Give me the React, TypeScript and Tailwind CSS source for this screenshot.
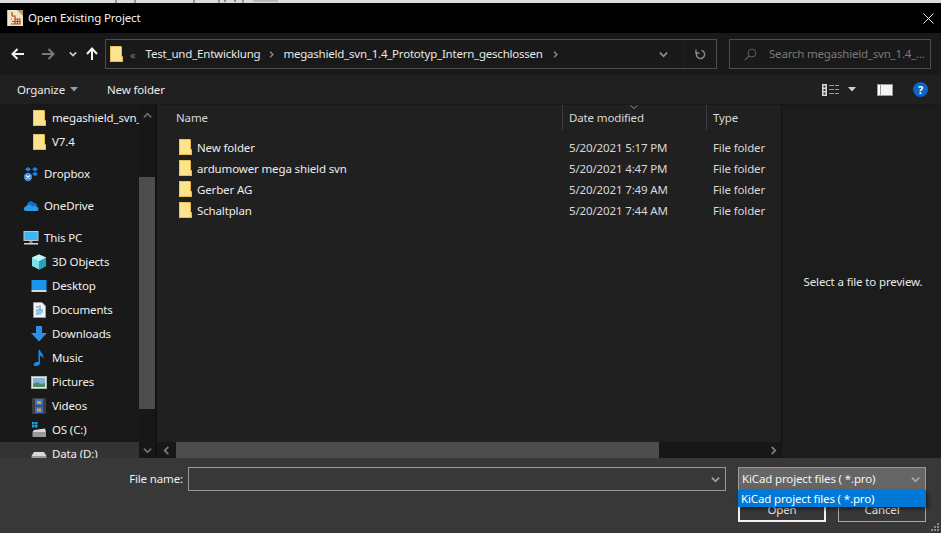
import React from "react";

function Folder({ className = "" }: { className?: string }) {
  return (
    <svg viewBox="0 0 13 16" className={`w-[13px] h-[16px] shrink-0 ${className}`}>
      <path d="M0 0H11.5V10.5H13V16H0Z" fill="#FDE38E" />
      <path d="M0.5 0.5H11M0.5 0.5V15.5" fill="none" stroke="#E9C25E" />
      <path d="M11.5 1V10.5H12.5V15.5H1" fill="none" stroke="#EDB93F" />
    </svg>
  );
}

const Chevron = ({ dir = "down", color = "#7f7f7f", size = 10 }: { dir?: string; color?: string; size?: number }) => {
  const d = { down: "M1 3L5 7L9 3", up: "M1 7L5 3L9 7", left: "M7 1L3 5L7 9", right: "M3 1L7 5L3 9" }[dir];
  return (
    <svg viewBox="0 0 10 10" width={size} height={size} className="shrink-0">
      <path d={d} fill="none" stroke={color} strokeWidth="2" />
    </svg>
  );
};

const sideIcons: Record<string, React.ReactNode> = {
  dropbox: (
    <svg viewBox="0 0 16 16" className="w-4 h-4">
      <path d="M5 1L8 3.2L5 5.5L2 3.2ZM12 1L15 3.2L12 5.5L9 3.2ZM9 8L12 5.7L15 8L12 10.2Z" fill="#1a82e8" />
      <circle cx="5" cy="11" r="4.2" fill="#3f8fe0" />
      <path d="M3 9.5L7 12.5M3 12.5L7 9.5" stroke="#fff" strokeWidth="1.2" />
    </svg>
  ),
  onedrive: (
    <svg viewBox="0 0 16 12" className="w-4 h-3">
      <path d="M4 4C5 1 9 0 11 3C13 3 14 4 14 6L6 8Z" fill="#0f6fc6" />
      <path d="M3 11C0 11 0 7 3 6.5C4 4 8 4 9 6.5C12 5 16 7 15.5 9.5C15.5 10.5 14.5 11 14 11Z" fill="#2a9ae8" />
    </svg>
  ),
  pc: (
    <svg viewBox="0 0 16 16" className="w-4 h-4">
      <rect x="0.5" y="1" width="15" height="10" fill="#bfc5ca" />
      <rect x="1.5" y="2" width="13" height="8" fill="#3db4f2" />
      <rect x="6.5" y="11" width="3" height="2" fill="#8a8f94" />
      <rect x="1" y="13" width="14" height="1.5" fill="#d5d8da" />
    </svg>
  ),
  objects: (
    <svg viewBox="0 0 16 16" className="w-4 h-4">
      <path d="M8 0.5L15 3.5V12L8 15.5L1 12V3.5Z" fill="#7fe0ea" />
      <path d="M8 7L15 3.5V12L8 15.5Z" fill="#1fa5c4" />
      <path d="M8 0.5L15 3.5L8 7L1 3.5Z" fill="#c5f4f6" />
    </svg>
  ),
  desktop: (
    <svg viewBox="0 0 16 14" className="w-4 h-[14px]">
      <rect x="0.5" y="1" width="15" height="10.5" fill="#1996ef" />
      <rect x="0.5" y="11" width="15" height="2" fill="#cfd8df" />
    </svg>
  ),
  documents: (
    <svg viewBox="0 0 13 16" className="w-[13px] h-4">
      <path d="M0.5 0.5H9L12.5 4V15.5H0.5Z" fill="#f2f2f2" stroke="#9a9a9a" />
      <path d="M3 5H6M7 3V8M3 8H10M3 10H10M3 12H8" stroke="#3d8fd0" strokeWidth="1" />
    </svg>
  ),
  downloads: (
    <svg viewBox="0 0 16 16" className="w-4 h-4">
      <path d="M5 0H11V7H16L8 15.5L0 7H5Z" fill="#2f8fe6" />
    </svg>
  ),
  music: (
    <svg viewBox="0 0 12 16" className="w-3 h-4">
      <path d="M5.5 0H7C7.5 3 11 4 10.5 9C10 7 8.5 6 7 5.8V13C7 15 4.5 16 2.5 16C0.5 16 0 14 1.5 13C2.5 12 4.5 11.7 5.5 12Z" fill="#1590ee" />
    </svg>
  ),
  pictures: (
    <svg viewBox="0 0 16 13" className="w-4 h-[13px]">
      <rect x="0.5" y="0.5" width="15" height="12" fill="#e4e4e4" stroke="#b0b0b0" />
      <rect x="2" y="2" width="12" height="9" fill="#7fb6d8" />
      <path d="M2 8L6 6L10 8L14 7V11H2Z" fill="#4e8a6a" />
    </svg>
  ),
  videos: (
    <svg viewBox="0 0 14 16" className="w-[14px] h-4">
      <rect width="14" height="16" fill="#3d3d3d" />
      <rect x="3" y="1" width="8" height="6.5" fill="#3c6fc0" />
      <rect x="3" y="8.5" width="8" height="6.5" fill="#3c6fc0" />
      <rect x="5" y="3" width="4" height="3" fill="#c8a63a" />
      <rect x="5" y="10.5" width="4" height="3" fill="#c8a63a" />
    </svg>
  ),
  os: (
    <svg viewBox="0 0 16 16" className="w-4 h-4">
      <path d="M1 0H3.5V2.5H1ZM4 0H6.5V2.5H4ZM1 3H3.5V5.5H1ZM4 3H6.5V5.5H4Z" fill="#1ba1e8" />
      <path d="M3 8L14 6.5L15 10H1.5Z" fill="#d8d8d8" />
      <rect x="1.5" y="10" width="13.5" height="5" fill="#9a9a9a" />
      <rect x="11" y="12" width="2" height="1.5" fill="#4fd060" />
    </svg>
  ),
  data: (
    <svg viewBox="0 0 16 16" className="w-4 h-4 translate-y-[5px]">
      <path d="M3 1H13L15.5 5H0.5Z" fill="#d8d8d8" />
      <rect x="0.5" y="5" width="15" height="5" fill="#9a9a9a" />
    </svg>
  ),
};

const sidebar = [
  { label: "megashield_svn_", icon: "folder", indent: 1 },
  { label: "V7.4", icon: "folder", indent: 1 },
  { label: "Dropbox", icon: "dropbox", indent: 0, gap: true },
  { label: "OneDrive", icon: "onedrive", indent: 0, gap: true },
  { label: "This PC", icon: "pc", indent: 0, gap: true },
  { label: "3D Objects", icon: "objects", indent: 1 },
  { label: "Desktop", icon: "desktop", indent: 1 },
  { label: "Documents", icon: "documents", indent: 1 },
  { label: "Downloads", icon: "downloads", indent: 1 },
  { label: "Music", icon: "music", indent: 1 },
  { label: "Pictures", icon: "pictures", indent: 1 },
  { label: "Videos", icon: "videos", indent: 1 },
  { label: "OS (C:)", icon: "os", indent: 1 },
  { label: "Data (D:)", icon: "data", indent: 1, active: true },
];

const files = [
  ["New folder", "5/20/2021 5:17 PM"],
  ["ardumower mega shield svn", "5/20/2021 4:47 PM"],
  ["Gerber AG", "5/20/2021 7:49 AM"],
  ["Schaltplan", "5/20/2021 7:44 AM"],
];

export default function App() {
  return (
    <div className="relative w-[941px] h-[533px] overflow-hidden bg-[#383838] text-[11.5px] leading-none text-[#f0f0f0] flex flex-col font-['Noto_Sans','Open_Sans',sans-serif] tracking-[-0.14px]">
      {/* background window sliver */}
      <svg viewBox="0 0 941 3" className="w-[941px] h-[3px] shrink-0 block">
        <rect width="941" height="3" fill="#dcdcdc" />
        <path d="M116 0V3M135 0V3M194 0V3M219 0V3M243 0V3" stroke="#555" />
        <path d="M225 0V2M235 0V2" stroke="#7a2a2a" />
        <path d="M253 1H278" stroke="#999" />
      </svg>

      {/* title */}
      <div className="h-[30px] bg-black shrink-0 flex items-center pl-[7px] pr-[7px] gap-[5px]">
        <svg viewBox="0 0 16 16" className="w-4 h-4 shrink-0">
          <rect width="16" height="16" fill="#efe4c8" />
          <path d="M10 0H16V6Z" fill="#b89a5c" />
          <path d="M0 0V16" stroke="#a08a5a" />
          <path d="M5 2V6H8V9H13V14H4M5 9H4M5 11.5H13M8 9V14M10.5 9V14" fill="none" stroke="#b5451c" strokeWidth="1.2" />
        </svg>
        <span className="text-[#f4f4f4] flex-1">Open Existing Project</span>
        <svg viewBox="0 0 12 12" className="w-[11px] h-[11px]">
          <path d="M0.5 0.5L11.5 11.5M11.5 0.5L0.5 11.5" stroke="#fff" strokeWidth="1" />
        </svg>
      </div>

      {/* nav */}
      <div className="h-[42px] bg-[#191919] shrink-0 flex items-center">
        <div className="flex items-center w-[105px] pl-[11px]">
          <svg viewBox="0 0 14 12" className="w-[14px] h-[12px]"><path d="M13 6H2M6.5 1L1.5 6L6.5 11" fill="none" stroke="#f2f2f2" strokeWidth="2" /></svg>
          <svg viewBox="0 0 14 12" className="w-[14px] h-[12px] ml-[16px]"><path d="M1 6H12M7.5 1L12.5 6L7.5 11" fill="none" stroke="#7a7a7a" strokeWidth="2" /></svg>
          <span className="ml-[14px]"><Chevron color="#d0d0d0" size={8} /></span>
          <svg viewBox="0 0 12 14" className="w-[12px] h-[14px] ml-[9px]"><path d="M6 13V2M1 7L6 1.5L11 7" fill="none" stroke="#f2f2f2" strokeWidth="2" /></svg>
        </div>
        <div className="w-[612px] h-[30px] border border-[#4d4d4d] flex items-center pl-[4px]">
          <Folder />
          <span className="ml-[7px] text-[#7a7a7a] text-[11px] tracking-[-1px]">«</span>
          <span className="ml-[11px] text-[#e8e8e8] tracking-[-0.2px]">Test_und_Entwicklung</span>
          <span className="mx-[8px]"><Chevron dir="right" size={7} color="#8a8a8a" /></span>
          <span className="text-[#e8e8e8] tracking-[-0.22px]">megashield_svn_1.4_Prototyp_Intern_geschlossen</span>
          <span className="ml-[9px]"><Chevron dir="right" size={7} color="#8a8a8a" /></span>
          <span className="ml-auto mr-[15px]"><Chevron color="#8f8f8f" size={9} /></span>
          <div className="h-full w-[33px] border-l border-[#222] flex items-center justify-center">
            <svg viewBox="0 0 12 12" className="w-[11px] h-[11px]">
              <path d="M7 1.5A4.5 4.5 0 1 1 2.2 3.5" fill="none" stroke="#8a8a8a" strokeWidth="1.6" />
              <path d="M1 0.5V4.5H5" fill="none" stroke="#8a8a8a" strokeWidth="1.4" />
            </svg>
          </div>
        </div>
        <div className="ml-[12px] w-[202px] h-[30px] border border-[#4d4d4d] flex items-center pl-[14px]">
          <svg viewBox="0 0 14 14" className="w-[13px] h-[13px] shrink-0">
            <circle cx="8.5" cy="5.5" r="4.2" fill="none" stroke="#666" strokeWidth="1" />
            <path d="M5.5 8.5L1 13" stroke="#666" strokeWidth="1.3" />
          </svg>
          <span className="ml-[12px] text-[#7a7a7a] whitespace-nowrap tracking-[-0.2px]">Search megashield_svn_1.4_...</span>
        </div>
      </div>

      {/* toolbar */}
      <div className="h-[30px] bg-[#202020] shrink-0 flex items-center border-b border-[#181818]">
        <span className="ml-[17px] text-[#ececec]">Organize</span>
        <svg viewBox="0 0 8 5" className="w-[8px] h-[5px] ml-[5px]"><path d="M0 0H8L4 4.5Z" fill="#9a9a9a" /></svg>
        <span className="ml-[29px] text-[#ececec]">New folder</span>
        <div className="ml-auto flex items-center mr-[13px]">
          <svg viewBox="0 0 17 12" className="w-[17px] h-[12px]">
            <rect width="5" height="12" fill="#d8d8d8" />
            <rect x="1.5" y="1.5" width="2" height="2" fill="#333" />
            <rect x="1.5" y="5" width="2" height="2" fill="#333" />
            <rect x="1.5" y="8.5" width="2" height="2" fill="#333" />
            <path d="M7 1.5H12M13 1.5H17M7 5.5H12M13 5.5H17M7 9.5H12M13 9.5H17" stroke="#9a9a9a" />
          </svg>
          <svg viewBox="0 0 8 5" className="w-[8px] h-[5px] ml-[9px]"><path d="M0 0H8L4 4.5Z" fill="#d0d0d0" /></svg>
          <svg viewBox="0 0 16 12" className="w-[16px] h-[12px] ml-[21px]">
            <rect width="16" height="12" fill="#9a9a9a" />
            <rect x="1" y="1" width="2" height="10" fill="#fff" />
            <rect x="4" y="1" width="11" height="10" fill="#f4f4f4" />
          </svg>
          <div className="ml-[20px] w-[15px] h-[15px] rounded-full bg-[#0a66c8] flex items-center justify-center text-[11px] font-bold text-white">?</div>
        </div>
      </div>

      {/* body */}
      <div className="flex h-[353px] shrink-0 bg-[#202020]">
        {/* sidebar */}
        <div className="w-[139px] bg-[#191919] overflow-hidden shrink-0 pt-px">
          {sidebar.map((s) => (
            <div
              key={s.label}
              className={`h-[24px] flex items-center whitespace-nowrap overflow-hidden ${s.gap ? "mt-[8px]" : ""} ${s.active ? "bg-[#333333]" : ""}`}
            >
              <span className={`flex justify-center shrink-0 ${s.indent ? "w-[16px] ml-[31px]" : "w-[16px] ml-[23px]"}`}>
                {s.icon === "folder" ? <Folder /> : sideIcons[s.icon]}
              </span>
              <span className="ml-[5px] text-[#f0f0f0]">{s.label}</span>
            </div>
          ))}
        </div>
        {/* sidebar scrollbar */}
        <div className="w-[16px] bg-[#171717] shrink-0 flex flex-col">
          <div className="h-[17px] mt-[2px] flex items-center justify-center"><Chevron dir="up" size={9} color="#6e6e6e" /></div>
          <div className="mt-[53px] h-[232px] bg-[#4d4d4d]" />
          <div className="flex-1" />
          <div className="h-[16px] flex items-center justify-center"><Chevron size={9} color="#6e6e6e" /></div>
        </div>
        <div className="w-[2px] bg-[#111111] shrink-0" />

        {/* file list */}
        <div className="w-[625px] shrink-0 flex flex-col border-r border-[#141414]">
          <div className="h-[25px] flex items-center relative text-[#d8d8d8] shrink-0">
            <span className="w-[406px] pl-[19px] h-full flex items-center border-r border-[#3c3c3c]">Name</span>
            <span className="w-[144px] pl-[6px] h-full flex items-center border-r border-[#3c3c3c]">Date modified</span>
            <span className="pl-[6px]">Type</span>
            <span className="absolute left-[473px] top-0"><svg viewBox="0 0 8 4" className="w-[8px] h-[4px]"><path d="M0.5 0.5L4 3.5L7.5 0.5" fill="none" stroke="#8a8a8a" /></svg></span>
          </div>
          <div className="flex-1 pt-[7px]">
            {files.map(([n, d]) => (
              <div key={n} className="h-[21px] flex items-center">
                <span className="w-[405px] pl-[22px] flex items-center">
                  <Folder className="-translate-y-px" />
                  <span className="ml-[5px] text-[#ececec]">{n}</span>
                </span>
                <span className="w-[144px] pl-[7px] text-[#d8d8d8]">{d}</span>
                <span className="pl-[7px] text-[#d8d8d8]">File folder</span>
              </div>
            ))}
          </div>
          <div className="h-[16px] bg-[#171717] flex items-center shrink-0 relative">
            <span className="w-[19px] flex justify-center"><Chevron dir="left" size={9} color="#7a7a7a" /></span>
            <div className="w-[483px] h-full bg-[#4d4d4d]" />
            <span className="ml-auto w-[16px] flex justify-center"><Chevron dir="right" size={9} color="#7a7a7a" /></span>
          </div>
        </div>

        {/* preview */}
        <div className="flex-1 flex items-center justify-center bg-[#1c1c1c] text-[#e8e8e8] pl-[3px]">Select a file to preview.</div>
      </div>

      {/* footer */}
      <div className="flex-1 bg-[#383838] relative pt-[9px]">
        <div className="flex items-start">
          <span className="w-[183px] h-[24px] flex items-center justify-end text-[#f0f0f0]">File name:</span>
          <div className="ml-[5px] w-[538px] h-[24px] border border-[#9a9a9a] flex items-center justify-end pr-[5px]">
            <Chevron size={9} color="#a0a0a0" />
          </div>
          <div className="ml-[12px] w-[188px] flex flex-col">
            <div className="h-[24px] border border-[#9a9a9a] bg-[#666666] flex items-center pl-[3px] pr-[5px]">
              <span className="flex-1 text-[#f4f4f4]">KiCad project files ( *.pro)</span>
              <Chevron size={9} color="#a8a8a8" />
            </div>
            <div className="mt-[7px] flex justify-between">
              <div className="w-[88px] h-[24px] border-2 border-[#f2f2f2] flex items-center justify-center text-[#e8e8e8]">Open</div>
              <div className="w-[88px] h-[24px] border border-[#aaaaaa] flex items-center justify-center text-[#e8e8e8]">Cancel</div>
            </div>
          </div>
        </div>
        {/* dropdown popup */}
        <div className="absolute left-[738px] top-[32px] w-[188px] h-[17px] bg-[#0078d7] flex items-center pl-[3px] text-white shadow-[2px_2px_4px_rgba(0,0,0,0.5)] z-10">
          KiCad project files ( *.pro)
        </div>
        {/* resize grip */}
        <svg viewBox="0 0 10 10" className="absolute right-[1px] bottom-[1px] w-[10px] h-[10px]">
          <path d="M7 1h2v2H7zM4 4h2v2H4zM7 4h2v2H7zM1 7h2v2H1zM4 7h2v2H4zM7 7h2v2H7z" fill="#8a8a8a" />
        </svg>
      </div>
    </div>
  );
}
